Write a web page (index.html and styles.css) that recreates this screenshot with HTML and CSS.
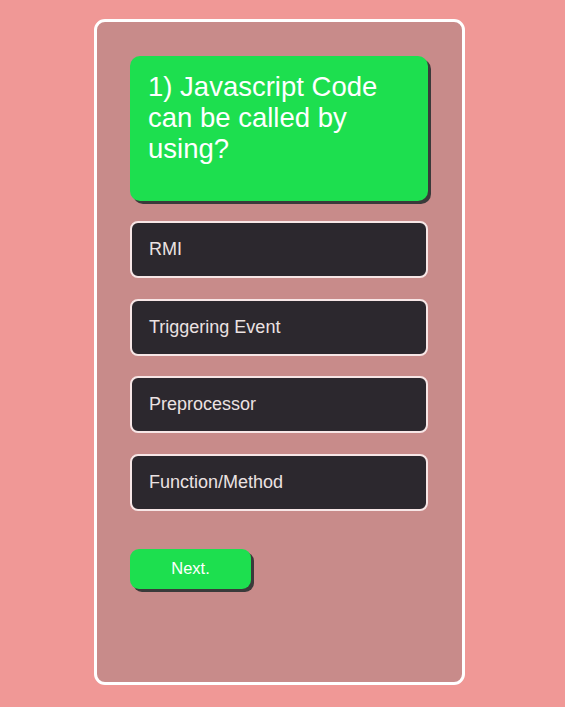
FILE: index.html
```html
<!DOCTYPE html>
<html>
<head>
<meta charset="utf-8">
<link rel="stylesheet" href="styles.css">
</head>
<body>
<div class="card">
  <div class="question">1) Javascript Code can be called by using?</div>
  <div class="options">
    <div class="option">RMI</div>
    <div class="option">Triggering Event</div>
    <div class="option">Preprocessor</div>
    <div class="option">Function/Method</div>
  </div>
  <button class="next">Next.</button>
</div>
</body>
</html>
```
FILE: styles.css
```css
html, body {
  margin: 0;
  padding: 0;
  background: #f09896;
  font-family: "Liberation Sans", Arial, sans-serif;
}
body {
  padding-top: 19px;
}
.card {
  box-sizing: border-box;
  margin-left: 94px;
  width: 371px;
  height: 666px;
  border: 3px solid #ffffff;
  border-radius: 11px;
  background: #c88b8a;
  padding: 34px 34px 0 33px;
}
.question {
  box-sizing: border-box;
  width: 298px;
  height: 145px;
  background: #1ddf4f;
  border-radius: 10px;
  box-shadow: 3px 3px 0 #3a3a3a;
  color: #ffffff;
  font-size: 27.5px;
  line-height: 31px;
  padding: 15px 14px 0 18px;
}
.options {
  display: flex;
  flex-direction: column;
  gap: 20.5px;
  margin-top: 20px;
}
.option {
  box-sizing: border-box;
  width: 298px;
  height: 57px;
  background: #2c282e;
  border: 2px solid #f7e6e6;
  border-radius: 8px;
  color: #ebe2e2;
  font-size: 18px;
  display: flex;
  align-items: center;
  padding-left: 17px;
}
.next {
  display: block;
  margin-top: 38px;
  width: 121px;
  height: 40px;
  border: none;
  border-radius: 9px;
  background: #1ddf4f;
  box-shadow: 3px 3px 0 #3a3a3a;
  color: #ffffff;
  font-family: "Liberation Sans", Arial, sans-serif;
  font-size: 16.5px;
  padding: 0;
}
```
